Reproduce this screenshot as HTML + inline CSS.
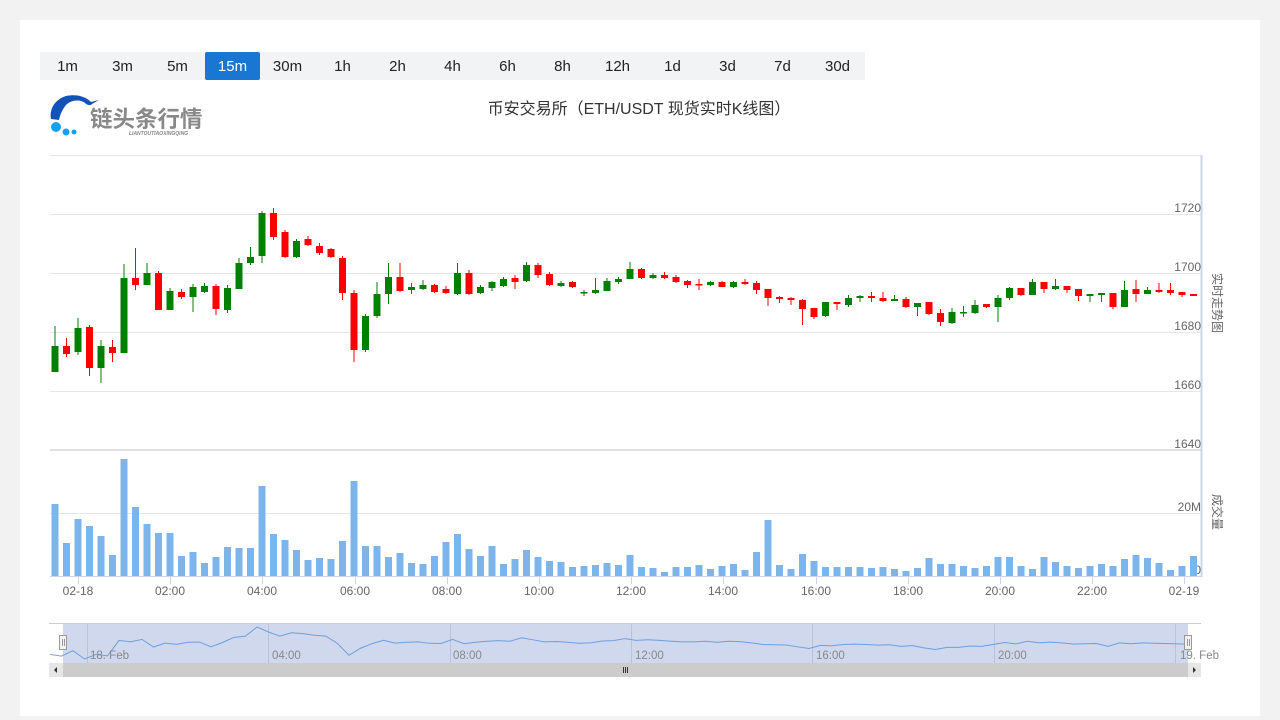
<!DOCTYPE html>
<html><head><meta charset="utf-8">
<style>
body{margin:0;background:#f2f2f2;font-family:"Liberation Sans","Noto Sans CJK SC",sans-serif;}
#card{position:absolute;left:20px;top:20px;width:1240px;height:696px;background:#fff;}
.btns{position:absolute;left:40px;top:52px;height:28px;display:flex;background:#f2f3f5;}
.btns div{width:55px;height:28px;line-height:29px;text-align:center;font-size:15px;color:#222;}
.btns div.a{background:#1976d2;color:#fff;border-radius:2px;}
svg{position:absolute;left:0;top:0;}
</style></head><body>
<div id="card"></div>
<div class="btns"><div>1m</div><div>3m</div><div>5m</div><div class="a">15m</div><div>30m</div><div>1h</div><div>2h</div><div>4h</div><div>6h</div><div>8h</div><div>12h</div><div>1d</div><div>3d</div><div>7d</div><div>30d</div></div>
<svg id="s" width="1280" height="720" font-family="Liberation Sans, Noto Sans CJK SC, sans-serif"></svg>
<script>
const C=[[346,372,326,372,1],[346,354,338,357,0],[328,352,318,355,1],[327,368,325,376,0],[346,368,340,383,1],[347,353,340,362,0],[278,353,264,353,1],[278,285,248,290,0],[273,285,263,285,1],[273,310,271,310,0],[291,310,288,310,1],[292,297,289,299,0],[287,297,284,312,1],[286,292,283,293,1],[286,309,284,315,0],[288,310,285,313,1],[263,289,258,289,1],[257,263,247,265,1],[213,256,211,263,1],[213,237,208,240,0],[232,257,230,258,0],[241,257,239,258,1],[239,245,236,246,0],[246,253,243,255,0],[249,257,248,258,0],[258,293,256,300,0],[293,350,290,362,0],[316,350,314,352,1],[294,316,282,318,1],[277,294,263,304,1],[277,291,263,292,0],[287,290,283,294,1],[285,289,280,290,1],[285,292,284,293,0],[289,293,286,294,0],[273,294,263,295,1],[273,294,270,295,0],[287,293,285,294,1],[282,288,281,291,1],[279,286,277,287,1],[278,282,275,289,0],[265,281,262,282,1],[265,275,263,278,0],[274,285,272,286,0],[283,286,281,287,1],[282,287,281,288,0],
[292,293,290,296,1],[290,293,278,294,1],[281,291,278,291,1],[279,282,277,284,1],[269,279,262,279,1],[269,278,268,279,0],[275,278,273,279,1],[275,278,272,279,0],[277,282,275,283,0],[281,285,280,288,0],[284,285,279,290,0],[282,285,281,286,1],[282,287,281,287,0],[282,287,281,288,1],[282,284,279,285,0],[283,290,281,294,0],[289,298,289,306,0],[297,299,296,303,0],[298,300,297,305,0],[300,309,299,325,0],[308,317,308,319,0],[302,316,302,317,1],[302,304,302,310,0],[298,305,295,307,1],[296,298,295,302,1],[296,298,292,302,0],[298,301,292,302,0],[299,301,295,301,1],[299,307,297,308,0],[303,307,303,316,1],[302,314,302,315,0],[313,322,309,326,0],[312,323,308,324,1],[312,313,306,317,1],[305,313,300,314,1],[304,307,304,308,0],[298,307,295,322,1],[288,298,287,300,1],[288,295,288,296,0],[282,295,279,295,1],[282,289,282,293,0],[286,289,279,290,1],[286,290,286,293,0],[289,296,289,301,0],[294,296,294,302,1],[293,295,293,302,1],[293,307,293,309,0],[290,307,281,307,1],[289,294,280,302,0],[290,294,287,294,1],[290,292,283,293,0],[290,293,283,295,0],[292,295,292,297,0],[294,296,294,296,0]];
const V=[504,543,519,526,536,555,459,507,524,533,533,556,552,563,557,547,548,548,486,534,540,550,560,558,559,541,481,546,546,557,553,563,564,556,542,534,549,556,546,564,559,550,557,561,562,567,566,565,563,565,555,567,568,572,567,567,565,569,566,564,570,552,520,565,569,554,561,567,567,567,567,568,567,569,571,568,558,564,564,566,568,566,557,557,566,569,557,562,566,568,566,564,566,559,555,558,563,570,566,556];
let h='';
[155,214,273,332,391,513].forEach(y=>h+=`<line x1="50" x2="1201" y1="${y+.5}" y2="${y+.5}" stroke="#e6e6e6"/>`);
h+=`<line x1="50" x2="1201" y1="450" y2="450" stroke="#e0e0e0" stroke-width="2"/>`;
h+=`<line x1="50" x2="1201" y1="576.5" y2="576.5" stroke="#ccd6eb"/>`;
h+=`<line x1="1201.5" x2="1201.5" y1="155" y2="577" stroke="#ccd6eb" stroke-width="2"/>`;
[[1720,214],[1700,273],[1680,332],[1660,391],[1640,450],['20M',513],['0',576]].forEach(([t,y])=>h+=`<text x="1201" y="${y-2}" text-anchor="end" font-size="12" fill="#666">${t}</text>`);
h+=`<text transform="translate(1213,303) rotate(90)" font-size="12" fill="#666" text-anchor="middle">实时走势图</text>`;
h+=`<text transform="translate(1213,512) rotate(90)" font-size="12" fill="#666" text-anchor="middle">成交量</text>`;
[['02-18',78],['02:00',170],['04:00',262],['06:00',355],['08:00',447],['10:00',539],['12:00',631],['14:00',723],['16:00',816],['18:00',908],['20:00',1000],['22:00',1092],['02-19',1184]].forEach(([t,x])=>{h+=`<line x1="${x+.5}" x2="${x+.5}" y1="577" y2="584" stroke="#ccd6eb"/><text x="${x}" y="595" text-anchor="middle" font-size="12" fill="#666">${t}</text>`});
let pts=[];
C.forEach((c,i)=>{const x=55+i*11.5;const col=c[4]?'#008000':'#ff0000';
h+=`<line x1="${x}" x2="${x}" y1="${c[2]}" y2="${c[3]}" stroke="${col}"/>`;
h+=`<rect x="${x-3.5}" y="${c[0]}" width="7" height="${Math.max(1.5,c[1]-c[0])}" fill="${col}"/>`;
const v=V[i];h+=`<rect x="${x-3.5}" y="${v}" width="7" height="${576-v}" fill="#7cb5ec"/>`;
const close=c[4]?c[0]:c[1];pts.push([50+i*11.5,626+(close-208)/165*34]);});
h+=`<line x1="49" x2="1201" y1="623.5" y2="623.5" stroke="#ccc"/>`;
h+=`<rect x="63" y="624" width="1125" height="39" fill="#ccd6eb" opacity=".95"/>`;
[87,268,450,631,812,994,1175].forEach(x=>h+=`<line x1="${x+.5}" x2="${x+.5}" y1="624" y2="663" stroke="#b8c3da"/>`);
h+=`<polyline fill="none" stroke="#6d9fe0" points="${pts.map(p=>p.join(',')).join(' ')}"/>`;
[['18. Feb',90],['04:00',272],['08:00',453],['12:00',635],['16:00',816],['20:00',998],['19. Feb',1180]].forEach(([t,x])=>h+=`<text x="${x}" y="659" font-size="11.5" fill="#888">${t}</text>`);
h+=`<rect x="59.5" y="635.5" width="7" height="14" fill="#f2f2f2" stroke="#999"/><line x1="62.5" x2="62.5" y1="639" y2="646" stroke="#999"/><line x1="64.5" x2="64.5" y1="639" y2="646" stroke="#999"/>`;
h+=`<rect x="1184.5" y="635.5" width="7" height="14" fill="#f2f2f2" stroke="#999"/><line x1="1187.5" x2="1187.5" y1="639" y2="646" stroke="#999"/><line x1="1189.5" x2="1189.5" y1="639" y2="646" stroke="#999"/>`;
h+=`<rect x="49" y="663" width="1152" height="14" fill="#f2f2f2"/><rect x="63" y="663" width="1125" height="14" fill="#cccccc"/>`;
h+=`<rect x="49" y="663" width="14" height="14" fill="#e6e6e6"/><path d="M57 667 L54 670 L57 673Z" fill="#333"/>`;
h+=`<rect x="1188" y="663" width="13" height="14" fill="#e6e6e6"/><path d="M1193 667 L1196 670 L1193 673Z" fill="#333"/>`;
h+=`<path d="M623.5 667v6M625.5 667v6M627.5 667v6" stroke="#333"/>`;
h+=`<text x="639" y="114" text-anchor="middle" font-size="16" fill="#333">币安交易所（ETH/USDT 现货实时K线图）</text>`;
// logo
h+=`<path d="M51 119 C49 108 56 99 66 96 C76 94 85 96 91 102 L99 100 L92 104 C90 106 87 105 85 103 C80 99 71 100 66 105 C62 110 60 115 59 120 Z" fill="#1253b8"/>`;
h+=`<circle cx="56" cy="127" r="5" fill="#16a1f0"/><circle cx="66" cy="132" r="3.5" fill="#16a1f0"/><circle cx="74" cy="132" r="2.5" fill="#16a1f0"/>`;
h+=`<text x="90" y="127" font-size="22.5" font-weight="bold" fill="#888" font-family="Noto Sans CJK SC, sans-serif">链头条行情</text>`;
h+=`<text x="129" y="135" font-size="5" fill="#888" font-style="italic" font-weight="bold">LIANTOUTIAOXINGQING</text>`;
document.getElementById('s').innerHTML=h;
</script>
</body></html>
